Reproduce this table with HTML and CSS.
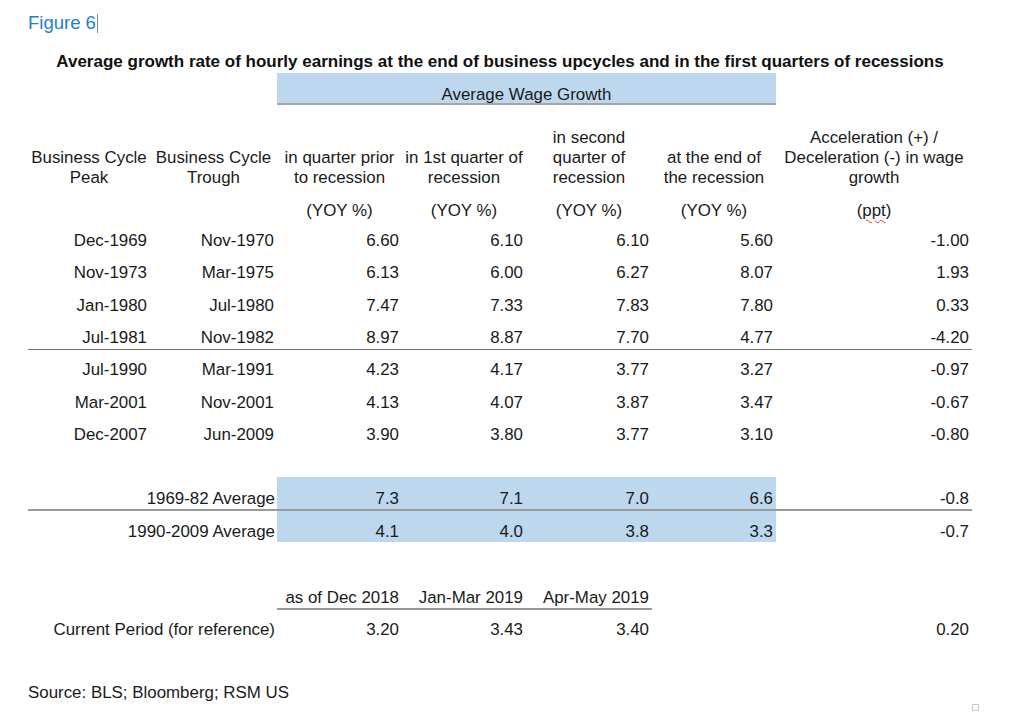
FILE: index.html
```html
<!DOCTYPE html>
<html lang="en">
<head>
<meta charset="utf-8">
<title>Figure 6</title>
<link rel="stylesheet" href="styles.css">
</head>
<body>
<div class="page">
  <div class="figure-label">Figure 6<span class="cursor"></span></div>
  <h1 class="title">Average growth rate of hourly earnings at the end of business upcycles and in the first quarters of recessions</h1>
  <table class="grid">
    <colgroup>
      <col class="c1"><col class="c2"><col class="c3"><col class="c4"><col class="c5"><col class="c6"><col class="c7">
    </colgroup>
    <tbody>
      <tr class="band-row">
        <td></td><td></td>
        <td colspan="4" class="band">Average Wage Growth</td>
        <td></td>
      </tr>
      <tr class="head-row">
        <td>Business Cycle<br>Peak</td>
        <td>Business Cycle<br>Trough</td>
        <td>in quarter prior<br>to recession</td>
        <td>in 1st quarter of<br>recession</td>
        <td class="tall">in second<br>quarter of<br>recession</td>
        <td>at the end of<br>the recession</td>
        <td class="tall">Acceleration (+) /<br>Deceleration (-) in wage<br>growth</td>
      </tr>
      <tr class="unit-row">
        <td></td><td></td>
        <td>(YOY %)</td><td>(YOY %)</td><td>(YOY %)</td><td>(YOY %)</td>
        <td>(<span class="spell">ppt</span>)</td>
      </tr>
      <tr class="data">
        <td>Dec-1969</td><td>Nov-1970</td><td>6.60</td><td>6.10</td><td>6.10</td><td>5.60</td><td>-1.00</td>
      </tr>
      <tr class="data">
        <td>Nov-1973</td><td>Mar-1975</td><td>6.13</td><td>6.00</td><td>6.27</td><td>8.07</td><td>1.93</td>
      </tr>
      <tr class="data">
        <td>Jan-1980</td><td>Jul-1980</td><td>7.47</td><td>7.33</td><td>7.83</td><td>7.80</td><td>0.33</td>
      </tr>
      <tr class="data sep">
        <td>Jul-1981</td><td>Nov-1982</td><td>8.97</td><td>8.87</td><td>7.70</td><td>4.77</td><td>-4.20</td>
      </tr>
      <tr class="data after-sep">
        <td>Jul-1990</td><td>Mar-1991</td><td>4.23</td><td>4.17</td><td>3.77</td><td>3.27</td><td>-0.97</td>
      </tr>
      <tr class="data">
        <td>Mar-2001</td><td>Nov-2001</td><td>4.13</td><td>4.07</td><td>3.87</td><td>3.47</td><td>-0.67</td>
      </tr>
      <tr class="data">
        <td>Dec-2007</td><td>Jun-2009</td><td>3.90</td><td>3.80</td><td>3.77</td><td>3.10</td><td>-0.80</td>
      </tr>
      <tr class="spacer-a"><td colspan="7">&nbsp;</td></tr>
      <tr class="avg avg-a">
        <td colspan="2" class="label">1969-82 Average</td>
        <td class="shade">7.3</td><td class="shade">7.1</td><td class="shade">7.0</td><td class="shade">6.6</td>
        <td>-0.8</td>
      </tr>
      <tr class="avg avg-b">
        <td colspan="2" class="label">1990-2009 Average</td>
        <td class="shade">4.1</td><td class="shade">4.0</td><td class="shade">3.8</td><td class="shade">3.3</td>
        <td>-0.7</td>
      </tr>
      <tr class="spacer-b"><td colspan="7">&nbsp;</td></tr>
      <tr class="cur-head">
        <td colspan="2"></td>
        <td class="ruled">as of Dec 2018</td><td class="ruled">Jan-Mar 2019</td><td class="ruled">Apr-May 2019</td>
        <td></td><td></td>
      </tr>
      <tr class="cur-row">
        <td colspan="2" class="label">Current Period (for reference)</td>
        <td>3.20</td><td>3.43</td><td>3.40</td><td></td><td>0.20</td>
      </tr>
    </tbody>
  </table>
  <div class="footer">
    <span class="source">Source: BLS; Bloomberg; RSM US</span>
    <span class="handle"></span>
  </div>
</div>
</body>
</html>
```

FILE: styles.css
```css
html, body {
  margin: 0;
  padding: 0;
  background: #ffffff;
}

body {
  font-family: "Liberation Sans", Arial, sans-serif;
  color: #1a1a1a;
}

.page {
  padding: 12px 0 0 28px;
  width: 951px;
}

.figure-label {
  font-size: 18.5px;
  line-height: 22px;
  color: #1f80d0;
}

.cursor {
  display: inline-block;
  width: 1px;
  height: 19px;
  background: #8a8a8a;
  margin-left: 1px;
  vertical-align: -4px;
}

.title {
  margin: 18px 0 0 0;
  width: 944px;
  text-align: center;
  font-size: 17px;
  line-height: 20px;
  font-weight: bold;
  color: #111111;
}

.grid {
  margin-top: 1px;
  width: 944px;
  table-layout: fixed;
  border-collapse: separate;
  border-spacing: 0;
  font-size: 16.9px;
}

.c1 { width: 122px; }
.c2 { width: 127px; }
.c3 { width: 125px; }
.c4 { width: 124px; }
.c5 { width: 126px; }
.c6 { width: 124px; }
.c7 { width: 196px; }

.grid td {
  padding: 0;
  white-space: nowrap;
}

/* Band heading */
.band-row td {
  line-height: 16px;
  padding-top: 14px;
  vertical-align: bottom;
}

.band-row td.band {
  background: #bdd7ee;
  text-align: center;
  border-bottom: 2px solid #a6a6a6;
}

/* Column headings */
.head-row td {
  text-align: center;
  vertical-align: bottom;
  line-height: 20px;
  padding-bottom: 7px;
}

.head-row td.tall {
  padding-top: 23px;
}

.unit-row td {
  text-align: center;
  line-height: 29px;
  padding-top: 1px;
}

.spell {
  text-decoration: underline wavy #e0403a;
  text-decoration-thickness: 1px;
  text-underline-offset: 3px;
}

/* Data rows */
.data td {
  text-align: right;
  padding-right: 3px;
  line-height: 32.4px;
}

.data.sep td {
  line-height: 23px;
  padding-top: 4px;
  border-bottom: 1px solid #6f6f6f;
}

.data.after-sep td {
  padding-top: 4px;
}

.spacer-a td {
  line-height: 25.6px;
}

.spacer-b td {
  line-height: 46px;
}

/* Averages */
.avg td {
  text-align: right;
  padding-right: 3px;
  line-height: 20px;
}

.avg td.label {
  padding-right: 2px;
}

.avg td.shade {
  background: #bdd7ee;
}

.avg-a td {
  padding-top: 12px;
  border-bottom: 2px solid #9a9a9a;
}

.avg-b td {
  padding-top: 11px;
}

/* Current period */
.cur-head td {
  text-align: right;
  padding-right: 3px;
  line-height: 20px;
}

.cur-head td.ruled {
  border-bottom: 2px solid #9a9a9a;
}

.cur-row td {
  text-align: right;
  padding-right: 3px;
  padding-top: 10px;
  line-height: 20px;
}

.cur-row td.label {
  padding-right: 2px;
}

/* Footer */
.footer {
  margin-top: 43px;
  display: flex;
  justify-content: space-between;
  align-items: flex-start;
}

.source {
  font-size: 16.9px;
  line-height: 20px;
}

.handle {
  width: 5px;
  height: 5px;
  border: 1px solid #c9c9c9;
  margin-top: 21px;
}
```
